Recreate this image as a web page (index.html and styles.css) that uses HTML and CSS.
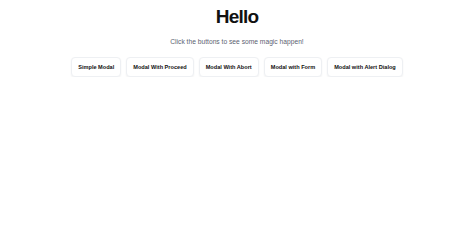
FILE: index.html
```html
<!DOCTYPE html>
<html lang="en">
<head>
  <meta charset="UTF-8" />
  <meta name="viewport" content="width=device-width, initial-scale=1.0" />
  <title>Hello</title>
  <link rel="stylesheet" href="styles.css">
</head>
<body>
  <h1>Hello</h1>
  <p class="subtitle">Click the buttons to see some magic happen!</p>

  <div class="buttons">
    <button class="btn">Simple Modal</button>
    <button class="btn">Modal With Proceed</button>
    <button class="btn">Modal With Abort</button>
    <button class="btn">Modal with Form</button>
    <button class="btn">Modal with Alert Dialog</button>
  </div>
</body>
</html>
```

FILE: styles.css
```css
body {
  margin: 0;
  font-family: 'Liberation Sans', Arial, sans-serif;
  background: #fff;
  color: #111;
  display: flex;
  flex-direction: column;
  align-items: center;
}

h1 {
  font-size: 19px;
  font-weight: 700;
  margin: 5px 0 0;
  line-height: 24px;
  letter-spacing: -0.8px;
}

.subtitle {
  font-size: 6.7px;
  color: #5b6271;
  margin: 8px 0 0;
  line-height: 10px;
}

.buttons {
  display: flex;
  gap: 5px;
  margin-top: 10px;
}

.btn {
  font-family: inherit;
  font-size: 5.6px;
  font-weight: 700;
  color: #111;
  background: #fff;
  border: 1px solid #eef0f3;
  border-radius: 4px;
  box-shadow: 0 1px 2px rgba(0, 0, 0, 0.05);
  height: 20px;
  padding: 0 6px;
  cursor: pointer;
}
```
